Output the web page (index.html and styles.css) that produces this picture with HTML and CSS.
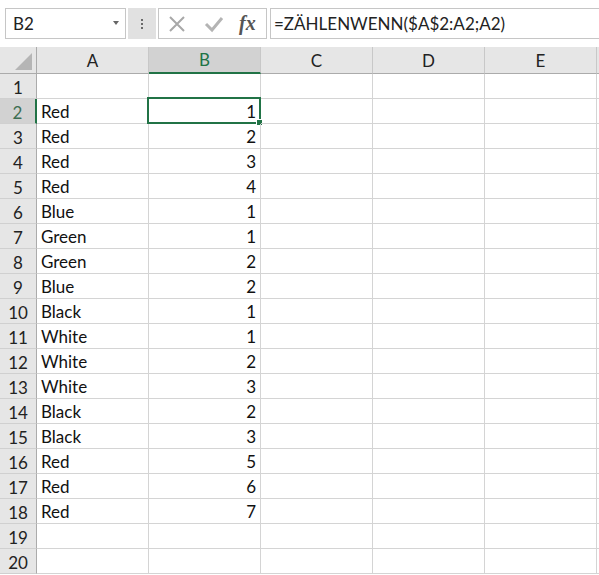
FILE: index.html
```html
<!DOCTYPE html>
<html lang="de">
<head>
<meta charset="utf-8">
<title>Excel</title>
<link rel="stylesheet" href="styles.css">
</head>
<body>
<div class="toolbar">
  <div class="namebox"><span class="name">B2</span><span class="caret"></span></div>
  <div class="grip"><span></span><span></span><span></span></div>
  <div class="fnbox">
    <svg class="ico" width="20" height="20" viewBox="0 0 20 20"><path d="M3 3 L17 17 M17 3 L3 17" stroke="#a8a8a8" stroke-width="2" fill="none"/></svg>
    <svg class="ico" width="20" height="20" viewBox="0 0 20 20"><path d="M2 10 L8 16 L18 4" stroke="#b4b4b4" stroke-width="3" fill="none"/></svg>
    <span class="fx">fx</span>
  </div>
  <div class="formula">=ZÄHLENWENN($A$2:A2;A2)</div>
</div>
<div class="sheet">
  <div class="corner"><span class="tri"></span></div>
  <div class="ch">A</div><div class="ch sel">B</div><div class="ch">C</div><div class="ch">D</div><div class="ch">E</div><div class="ch tail"></div>
</div>
<div class="sheet" id="rows"></div>
<script src="app.js"></script>
</body>
</html>
```
FILE: app.js
```js
var data = [
  ["", ""], ["Red", 1], ["Red", 2], ["Red", 3], ["Red", 4], ["Blue", 1], ["Green", 1], ["Green", 2],
  ["Blue", 2], ["Black", 1], ["White", 1], ["White", 2], ["White", 3], ["Black", 2], ["Black", 3],
  ["Red", 5], ["Red", 6], ["Red", 7], ["", ""], ["", ""]
];
var host = document.getElementById("rows");
var html = "";
data.forEach(function (r, i) {
  var n = i + 1;
  html += '<div class="rh' + (n === 2 ? ' sel' : '') + '">' + n + '</div>';
  html += '<div class="c">' + r[0] + '</div>';
  html += '<div class="c num">' + (n === 2 ? '<span class="selbox"><span class="handle"></span></span>' : '') + r[1] + '</div>';
  html += '<div class="c"></div><div class="c"></div><div class="c"></div><div class="c tail"></div>';
});
host.innerHTML = html;
```
FILE: styles.css
```css
html, body {
  margin: 0;
  padding: 0;
  background: #fff;
  font-family: Lato, "Open Sans", sans-serif;
  color: #000;
  overflow: hidden;
}
.toolbar {
  height: 47px;
  display: flex;
  align-items: flex-start;
  padding-top: 8px;
  box-sizing: border-box;
  padding-left: 5px;
}
.namebox {
  width: 121px;
  height: 31px;
  box-sizing: border-box;
  border: 1px solid #c6c6c6;
  display: flex;
  align-items: center;
  justify-content: space-between;
  padding: 0 6px 0 7px;
  font-size: 17px;
  color: #222;
}
.caret {
  width: 0;
  height: 0;
  border-left: 3px solid transparent;
  border-right: 3px solid transparent;
  border-top: 4px solid #666;
  margin-top: -2px;
}
.grip {
  width: 28px;
  height: 31px;
  margin-left: 2px;
  background: #e1e1e1;
  display: flex;
  flex-direction: column;
  align-items: center;
  justify-content: center;
  gap: 2px;
}
.grip span {
  width: 2px;
  height: 2px;
  background: #6a6a6a;
}
.fnbox {
  width: 109px;
  height: 31px;
  margin-left: 2px;
  box-sizing: border-box;
  border: 1px solid #c6c6c6;
  display: flex;
  align-items: center;
  padding-left: 8px;
  gap: 17px;
}
.ico { display: block; }
.fx {
  font-family: "Liberation Serif", serif;
  font-style: italic;
  font-weight: bold;
  font-size: 20px;
  color: #555;
  margin-left: -2px;
}
.formula {
  flex: 1;
  height: 31px;
  margin-left: 3px;
  box-sizing: border-box;
  border: 1px solid #c6c6c6;
  border-right: none;
  font-size: 17px;
  line-height: 29px;
  padding-left: 3px;
  color: #222;
}
.sheet {
  display: grid;
  grid-template-columns: 37px repeat(5, 112px) 1fr;
}
.corner, .ch {
  height: 27px;
  box-sizing: border-box;
  background: #e6e6e6;
  border-bottom: 1px solid #ababab;
  border-right: 1px solid #c8c8c8;
  font-size: 17px;
  display: flex;
  align-items: center;
  justify-content: center;
  color: #222;
}
.corner {
  position: relative;
  border-right: 1px solid #ababab;
}
.tri {
  position: absolute;
  right: 4px;
  bottom: 3px;
  width: 0;
  height: 0;
  border-left: 17px solid transparent;
  border-bottom: 17px solid #b5b5b5;
}
.ch.sel {
  background: #d2d2d2;
  color: #217346;
  border-bottom: 2px solid #217346;
}
.ch.tail { border-right: none; }
.rh {
  height: 25px;
  box-sizing: border-box;
  background: #e6e6e6;
  border-bottom: 1px solid #d0d0d0;
  border-right: 1px solid #ababab;
  font-size: 17px;
  color: #222;
  display: flex;
  align-items: center;
  justify-content: center;
  padding-top: 2px;
}
.rh.sel {
  background: #d2d2d2;
  color: #3e6e52;
  border-right: 2px solid #217346;
}
.c {
  height: 25px;
  box-sizing: border-box;
  border-bottom: 1px solid #d4d4d4;
  border-right: 1px solid #d4d4d4;
  font-size: 17px;
  line-height: 24px;
  padding: 1px 4px 0;
  position: relative;
  white-space: nowrap;
  color: #111;
}
.c.num { text-align: right; }
.c.tail { border-right: none; }
.selbox {
  position: absolute;
  left: -2px;
  top: -2px;
  right: -1px;
  bottom: -1px;
  border: 2px solid #217346;
}
.handle {
  position: absolute;
  right: -4px;
  bottom: -4px;
  width: 5px;
  height: 5px;
  background: #217346;
  border: 1px solid #fff;
}
```
